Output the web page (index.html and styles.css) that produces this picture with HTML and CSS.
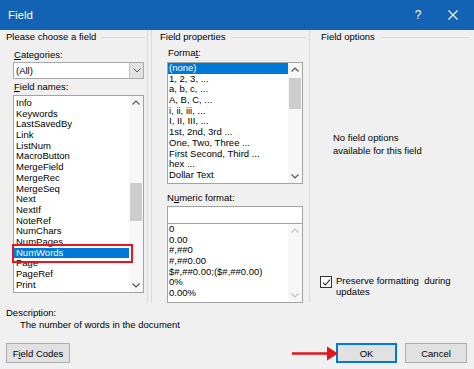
FILE: index.html
```html
<!DOCTYPE html>
<html>
<head>
<meta charset="utf-8">
<link rel="stylesheet" href="styles.css">
</head>
<body>
<div class="dialog">
  <div class="titlebar">
    <span class="title">Field</span>
    <span class="tb-help">?</span>
    <span class="tb-close"><svg width="10" height="10" viewBox="0 0 10 10"><path d="M0.5 0.5L9.5 9.5M9.5 0.5L0.5 9.5" stroke="#fff" stroke-width="1.1" fill="none"/></svg></span>
  </div>
  <div class="main">
    <div class="panel panel-left">
      <div class="group-head">Please choose a field</div>
      <div class="label lbl-cat"><u>C</u>ategories:</div>
      <div class="combo">
        <span class="combo-text">(All)</span>
        <span class="combo-btn"><svg width="8" height="5" viewBox="0 0 8 5"><path d="M0.5 0.5L4 4L7.5 0.5" stroke="#555" stroke-width="1" fill="none"/></svg></span>
      </div>
      <div class="label lbl-names"><u>F</u>ield names:</div>
      <div class="listbox list-names">
        <div class="items">
          <div class="item">Info</div>
          <div class="item">Keywords</div>
          <div class="item">LastSavedBy</div>
          <div class="item">Link</div>
          <div class="item">ListNum</div>
          <div class="item">MacroButton</div>
          <div class="item">MergeField</div>
          <div class="item">MergeRec</div>
          <div class="item">MergeSeq</div>
          <div class="item">Next</div>
          <div class="item">NextIf</div>
          <div class="item">NoteRef</div>
          <div class="item">NumChars</div>
          <div class="item">NumPages</div>
          <div class="item selected marked">NumWords</div>
          <div class="item">Page</div>
          <div class="item">PageRef</div>
          <div class="item">Print</div>
        </div>
        <div class="scrollbar">
          <span class="arrow"><svg width="8" height="5" viewBox="0 0 8 5"><path d="M0.5 4.5L4 1L7.5 4.5" stroke="#555" stroke-width="1.2" fill="none"/></svg></span>
          <span class="track"><span class="thumb thumb-names"></span></span>
          <span class="arrow"><svg width="8" height="5" viewBox="0 0 8 5"><path d="M0.5 0.5L4 4L7.5 0.5" stroke="#555" stroke-width="1.2" fill="none"/></svg></span>
        </div>
      </div>
    </div>

    <div class="panel panel-mid">
      <div class="group-head">Field properties</div>
      <div class="label lbl-format">Forma<u>t</u>:</div>
      <div class="listbox list-format">
        <div class="items">
          <div class="item selected">(none)</div>
          <div class="item">1, 2, 3, ...</div>
          <div class="item">a, b, c, ...</div>
          <div class="item">A, B, C, ...</div>
          <div class="item">i, ii, iii, ...</div>
          <div class="item">I, II, III, ...</div>
          <div class="item">1st, 2nd, 3rd ...</div>
          <div class="item">One, Two, Three ...</div>
          <div class="item">First Second, Third ...</div>
          <div class="item">hex ...</div>
          <div class="item">Dollar Text</div>
        </div>
        <div class="scrollbar">
          <span class="arrow"><svg width="8" height="5" viewBox="0 0 8 5"><path d="M0.5 4.5L4 1L7.5 4.5" stroke="#555" stroke-width="1.2" fill="none"/></svg></span>
          <span class="track"><span class="thumb thumb-format"></span></span>
          <span class="arrow"><svg width="8" height="5" viewBox="0 0 8 5"><path d="M0.5 0.5L4 4L7.5 0.5" stroke="#555" stroke-width="1.2" fill="none"/></svg></span>
        </div>
      </div>
      <div class="label lbl-numeric">N<u>u</u>meric format:</div>
      <div class="textbox"></div>
      <div class="listbox list-numeric">
        <div class="items">
          <div class="item">0</div>
          <div class="item">0.00</div>
          <div class="item">#,##0</div>
          <div class="item">#,##0.00</div>
          <div class="item">$#,##0.00;($#,##0.00)</div>
          <div class="item">0%</div>
          <div class="item">0.00%</div>
        </div>
        <div class="scrollbar disabled">
          <span class="arrow"><svg width="8" height="5" viewBox="0 0 8 5"><path d="M0.5 4.5L4 1L7.5 4.5" stroke="#c2c2c2" stroke-width="1.2" fill="none"/></svg></span>
          <span class="track"></span>
          <span class="arrow"><svg width="8" height="5" viewBox="0 0 8 5"><path d="M0.5 0.5L4 4L7.5 0.5" stroke="#c2c2c2" stroke-width="1.2" fill="none"/></svg></span>
        </div>
      </div>
    </div>

    <div class="panel panel-right">
      <div class="group-head">Field options</div>
      <div class="no-options">No field options<br>available for this field</div>
      <div class="check-row">
        <span class="checkbox"><svg width="9" height="9" viewBox="0 0 9 9"><path d="M1 4.6L3.4 7L8 1.6" stroke="#222" stroke-width="1.1" fill="none"/></svg></span>
        <span class="check-label">Preserve formatting&nbsp; during<br>updates</span>
      </div>
    </div>
  </div>

  <div class="desc">
    <div class="desc-label">Description:</div>
    <div class="desc-text">The number of words in the document</div>
  </div>

  <div class="buttons">
    <span class="btn btn-codes">F<u>i</u>eld Codes</span>
    <span class="spacer"></span>
    <span class="btn btn-ok">OK</span>
    <span class="btn btn-cancel">Cancel</span>
    <svg class="red-arrow" width="50" height="18" viewBox="0 0 50 18"><path d="M2 9.5H40" stroke="#e3141c" stroke-width="2.6" fill="none"/><path d="M37 2.5L48 9.5L37 16.5Z" fill="#e3141c"/></svg>
  </div>
</div>
</body>
</html>
```

FILE: styles.css
```css
* { box-sizing: border-box; }
html, body { margin: 0; padding: 0; }
body {
  width: 474px;
  height: 369px;
  background: #f0f0f0;
  font-family: "Liberation Sans", Arial, sans-serif;
  font-size: 9.5px;
  color: #000;
  overflow: hidden;
}
u { text-decoration: underline; text-underline-offset: 1px; }

.dialog {
  width: 474px;
  height: 369px;
  display: flex;
  flex-direction: column;
  position: relative;
}

.titlebar {
  height: 30px;
  background: #1263b3;
  color: #fff;
  display: flex;
  align-items: center;
  padding-left: 8px;
  font-size: 11.5px;
}
.title { flex: 1; }
.tb-help { width: 20px; text-align: center; font-size: 12px; margin-right: 15px; }
.tb-close { width: 20px; display: flex; justify-content: center; margin-right: 11px; }

.main {
  height: 273px;
  display: flex;
}
.panel {
  display: flex;
  flex-direction: column;
  padding-top: 1px;
}
.panel-left {
  width: 148px;
  border-right: 1px solid #d9d9d9;
  padding-left: 6px;
  padding-right: 2px;
}
.panel-mid {
  width: 159px;
  margin-left: 3px;
  border-left: 1px solid #d9d9d9;
  border-right: 1px solid #d9d9d9;
  padding-left: 8px;
  padding-right: 3px;
}
.panel-right {
  flex: 1;
  padding-left: 8px;
  padding-right: 4px;
  margin-left: 3px;
  padding-bottom: 6px;
}

.group-head {
  display: flex;
  align-items: center;
  height: 12px;
  line-height: 12px;
  white-space: nowrap;
}
.group-head::after {
  content: "";
  flex: 1;
  height: 1px;
  background: #dcdcdc;
  margin-left: 6px;
}

.label { line-height: 12px; height: 12px; }
.lbl-cat { margin: 6px 0 1px 8px; }
.lbl-names { margin: 2px 0 2px 8px; }
.lbl-format { margin: 4px 0 3px 8px; }
.lbl-numeric { margin: 8px 0 2px 7px; }

.combo {
  margin-left: 7px;
  width: 131px;
  height: 17px;
  border: 1px solid #a9a9a9;
  background: #fff;
  display: flex;
  align-items: center;
}
.combo-text { flex: 1; padding-left: 2px; }
.combo-btn {
  width: 14px;
  height: 15px;
  background: #e3e3e3;
  border-left: 1px solid #c4c4c4;
  display: flex;
  align-items: center;
  justify-content: center;
}

.listbox {
  background: #fff;
  border: 1px solid #a3a3a3;
  display: flex;
}
.list-names {
  margin-left: 7px;
  width: 131px;
  height: 198px;
}
.list-format {
  margin-left: 7px;
  width: 136px;
  height: 122px;
}
.list-numeric {
  margin-left: 7px;
  width: 136px;
  height: 79px;
  border-top: none;
}
.textbox {
  margin-left: 7px;
  width: 136px;
  height: 18px;
  background: #fff;
  border: 1px solid #a3a3a3;
}

.items { flex: 1; min-width: 0; }
.list-names .items { padding-top: 2px; }
.list-numeric .items { padding-top: 0; }
.item {
  height: 10.7px;
  line-height: 10.7px;
  padding-left: 2px;
  white-space: nowrap;
}
.list-format .item, .list-numeric .item { padding-left: 1px; }
.selected { background: #0078d7; color: #fff; }
.marked { position: relative; }
.marked::after {
  content: "";
  position: absolute;
  left: -2px;
  right: -4px;
  top: -4px;
  bottom: -5px;
  border: 2px solid #e5151f;
}

.scrollbar {
  width: 14px;
  display: flex;
  flex-direction: column;
  background: #f7f7f7;
}
.arrow {
  height: 13px;
  display: flex;
  align-items: center;
  justify-content: center;
  flex: none;
}
.track { flex: 1; display: flex; flex-direction: column; padding: 0 1px; }
.thumb { background: #cdcdcd; display: block; }
.thumb-names { margin-top: 74px; height: 38px; }
.thumb-format { margin-top: 2px; height: 31px; }

.no-options {
  margin-top: 89px;
  margin-left: 12px;
  line-height: 12.5px;
}
.check-row {
  margin-top: auto;
  display: flex;
  align-items: flex-start;
  margin-left: -1px;
}
.checkbox {
  width: 12px;
  height: 12px;
  border: 1px solid #333;
  background: #fff;
  display: flex;
  align-items: center;
  justify-content: center;
  margin-top: 1px;
  flex: none;
}
.check-label { margin-left: 4px; line-height: 11px; }

.desc { height: 40px; padding-left: 6px; padding-top: 4px; }
.desc-label { line-height: 12px; }
.desc-text { line-height: 11px; padding-left: 14px; }

.buttons {
  display: flex;
  align-items: flex-start;
  padding: 0 7px 0 6px;
  position: relative;
}
.btn {
  height: 20px;
  background: #e1e1e1;
  border: 1px solid #adadad;
  display: flex;
  align-items: center;
  justify-content: center;
}
.btn-codes { width: 64px; }
.spacer { flex: 1; }
.btn-ok { width: 61px; border: 1px solid #0078d7; box-shadow: inset 0 0 0 1px #0078d7; }
.btn-cancel { width: 62px; margin-left: 8px; }
.red-arrow {
  position: absolute;
  left: 290px;
  top: 1px;
}
```
